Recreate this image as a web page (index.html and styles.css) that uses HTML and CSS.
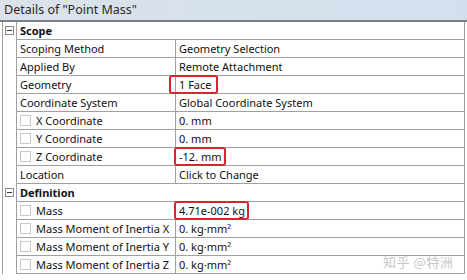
FILE: index.html
```html
<!DOCTYPE html>
<html>

<head>
    <meta charset='utf-8'>
    <title>Details of "Point Mass"</title>
    <meta name='viewport' content='width=device-width, initial-scale=1'>
    <link rel="stylesheet" href="styles.css">
</head>

<body>
    <div class="panel">
        <div class="title">Details of "Point Mass"</div>
        <div class="grid">
            <div class="row section">
                <div class="gutter"><span class="toggle"></span></div>
                <div class="head">Scope</div>
            </div>
            <div class="row">
                <div class="gutter"></div>
                <div class="name">Scoping Method</div>
                <div class="value">Geometry Selection</div>
            </div>
            <div class="row">
                <div class="gutter"></div>
                <div class="name">Applied By</div>
                <div class="value">Remote Attachment</div>
            </div>
            <div class="row">
                <div class="gutter"></div>
                <div class="name">Geometry</div>
                <div class="value"><span class="mark mark-wide">1 Face</span></div>
            </div>
            <div class="row">
                <div class="gutter"></div>
                <div class="name">Coordinate System</div>
                <div class="value">Global Coordinate System</div>
            </div>
            <div class="row">
                <div class="gutter"></div>
                <div class="name"><span class="check"></span>X Coordinate</div>
                <div class="value">0. mm</div>
            </div>
            <div class="row">
                <div class="gutter"></div>
                <div class="name"><span class="check"></span>Y Coordinate</div>
                <div class="value">0. mm</div>
            </div>
            <div class="row">
                <div class="gutter"></div>
                <div class="name"><span class="check"></span>Z Coordinate</div>
                <div class="value"><span class="mark">-12. mm</span></div>
            </div>
            <div class="row">
                <div class="gutter"></div>
                <div class="name">Location</div>
                <div class="value">Click to Change</div>
            </div>
            <div class="row section">
                <div class="gutter"><span class="toggle"></span></div>
                <div class="head">Definition</div>
            </div>
            <div class="row">
                <div class="gutter"></div>
                <div class="name"><span class="check"></span>Mass</div>
                <div class="value"><span class="mark">4.71e-002 kg</span></div>
            </div>
            <div class="row">
                <div class="gutter"></div>
                <div class="name"><span class="check"></span>Mass Moment of Inertia X</div>
                <div class="value">0. kg·mm²</div>
            </div>
            <div class="row">
                <div class="gutter"></div>
                <div class="name"><span class="check"></span>Mass Moment of Inertia Y</div>
                <div class="value">0. kg·mm²</div>
            </div>
            <div class="row">
                <div class="gutter"></div>
                <div class="name"><span class="check"></span>Mass Moment of Inertia Z</div>
                <div class="value">0. kg·mm²</div>
            </div>
        </div>
        <div class="watermark">知乎 @特洲</div>
    </div>
</body>

</html>
```

FILE: styles.css
```css
body,
html {
    margin: 0;
    padding: 0;
    background: #fff;
}

.panel {
    position: relative;
    width: 467px;
    height: 280px;
    font-family: "Noto Sans", sans-serif;
    font-size: 11px;
    color: #111;
    overflow: hidden;
}

.title {
    height: 20px;
    line-height: 20px;
    padding-left: 4px;
    font-size: 12.5px;
    color: #2a2a2a;
    background: linear-gradient(to right, #dbe2ea, #d2e0ee);
    border-bottom: 2px solid #7b8087;
}

.grid {
    margin-left: 2px;
    width: 461px;
    border-left: 1px solid #a0a0a0;
    border-right: 1px solid #a0a0a0;
}

.row {
    display: flex;
    height: 18px;
}

.gutter {
    width: 13px;
    flex: none;
    position: relative;
}

.toggle {
    position: absolute;
    left: 2px;
    top: 4px;
    width: 7px;
    height: 7px;
    border: 1px solid #8a8a8a;
    background: #fff;
}

.toggle::after {
    content: "";
    position: absolute;
    left: 1px;
    right: 1px;
    top: 3px;
    height: 1px;
    background: #333;
}

.name,
.value,
.head {
    box-sizing: border-box;
    height: 18px;
    line-height: 17px;
    border-bottom: 1px solid #a0a0a0;
    white-space: nowrap;
    display: flex;
    align-items: center;
}

.name {
    width: 160px;
    flex: none;
    padding-left: 3px;
    border-left: 1px solid #a0a0a0;
    border-right: 1px solid #a0a0a0;
}

.value {
    flex: 1;
    padding-left: 3px;
}

.head {
    flex: 1;
    padding-left: 3px;
    border-left: 1px solid #a0a0a0;
    font-weight: bold;
}

.check {
    width: 9px;
    height: 9px;
    border: 1px solid #c8c8c8;
    margin-right: 5px;
    flex: none;
}

.mark {
    position: relative;
}

.mark::after {
    content: "";
    position: absolute;
    left: -5px;
    right: -4px;
    top: -1px;
    bottom: -1px;
    border: 2.5px solid #d8262c;
    border-radius: 3px;
}

.mark-wide::after {
    left: -10px;
    right: -6px;
}

.watermark {
    position: absolute;
    left: 383px;
    top: 252px;
    font-family: "Noto Sans CJK SC", sans-serif;
    font-size: 13px;
    color: #c8c8c8;
    letter-spacing: 0.5px;
}
```
